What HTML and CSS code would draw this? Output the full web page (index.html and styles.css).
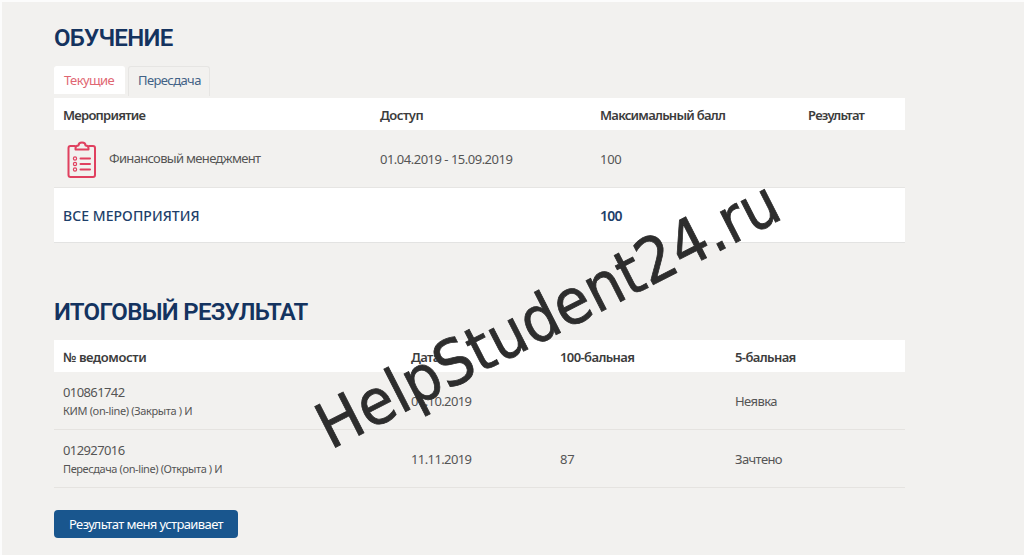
FILE: index.html
```html
<!DOCTYPE html>
<html lang="ru">
<head>
    <meta charset="UTF-8">
    <meta name="viewport" content="width=device-width, initial-scale=1.0">
    <title>Обучение</title>
    <link rel="stylesheet" href="styles.css">
</head>
<body>
    <div class="page">
        <h2 class="title-study">Обучение</h2>
        <div class="tabs">
            <a class="tab active">Текущие</a>
            <a class="tab">Пересдача</a>
        </div>
        <div class="table events">
            <div class="row head">
                <div class="h-event">Мероприятие</div>
                <div class="h-access">Доступ</div>
                <div class="h-max">Максимальный балл</div>
                <div class="h-result">Результат</div>
            </div>
            <div class="row event">
                <div class="event-name">
                    <svg class="icon" width="30" height="38" viewBox="0 0 30 38" fill="none" stroke="#e0405f" stroke-width="2" stroke-linecap="round" stroke-linejoin="round">
                        <path d="M8 5H3.500Q1.500 5 1.500 7V34Q1.500 36 3.500 36H26Q28 36 28 34V7Q28 5 26 5H22"/>
                        <path d="M8.500 8.500V7Q8.500 4.500 11.500 4.500Q11.500 1.500 15 1.500T18.500 4.500Q21.500 4.500 21.500 7V8.500Z"/>
                        <path d="M13.500 17.500H23M13.500 23H23M13.500 28.500H23"/>
                        <g stroke-width="1.200">
                            <circle cx="8" cy="17.500" r="1.600"/>
                            <circle cx="8" cy="23" r="1.600"/>
                            <circle cx="8" cy="28.500" r="1.600"/>
                        </g>
                    </svg>
                    <span class="subject">Финансовый менеджмент</span>
                </div>
                <div class="period">01.04.2019 - 15.09.2019</div>
                <div class="num">100</div>
                <div></div>
            </div>
            <div class="row total">
                <div class="all">ВСЕ МЕРОПРИЯТИЯ</div>
                <div></div>
                <div class="all-num">100</div>
                <div></div>
            </div>
        </div>

        <h2 class="title-final">Итоговый результат</h2>
        <div class="table results">
            <div class="row head">
                <div class="h-sheet">№ ведомости</div>
                <div class="h-date">Дата</div>
                <div class="h-hundred">100-бальная</div>
                <div class="h-five">5-бальная</div>
            </div>
            <div class="row result">
                <div>
                    <div class="sheet">010861742</div>
                    <div class="note note-kim">КИМ (on-line) (Закрыта ) И</div>
                </div>
                <div class="date">01.10.2019</div>
                <div></div>
                <div class="mark">Неявка</div>
            </div>
            <div class="row result">
                <div>
                    <div class="sheet">012927016</div>
                    <div class="note">Пересдача (on-line) (Открыта ) И</div>
                </div>
                <div class="date">11.11.2019</div>
                <div class="num">87</div>
                <div class="mark">Зачтено</div>
            </div>
        </div>
        <button class="btn">Результат меня устраивает</button>
    </div>
    <div class="watermark">HelpStudent24.ru</div>
</body>
</html>
```
FILE: styles.css
```css
* { box-sizing: border-box; }
body { margin: 0; height: 555px; overflow: hidden; position: relative; background: #f2f1ef; border-top: 2px solid #fcfcfc; border-left: 2px solid #fcfcfc; font-family: "Noto Sans", "Open Sans", sans-serif; font-size: 13px; letter-spacing: -0.6px; color: #555; white-space: nowrap; }
.page { width: 903px; padding: 20px 0 0 52px; }
h2 { margin: 0; height: 32px; line-height: 32px; font-family: Roboto, sans-serif; font-size: 24px; font-weight: 600; letter-spacing: -0.7px; color: #14335f; text-transform: uppercase; }
.tabs { display: flex; gap: 3px; height: 30px; margin-top: 12px; align-items: flex-start; }
.tab { height: 30px; width: 82px; line-height: 26px; padding: 0 9px; border: 1px solid #e6e5e3; border-bottom: none; border-radius: 3px 3px 0 0; color: #426286; }
.tab.active { width: 71px; height: 28px; background: #fff; border-color: #fff; color: #df6672; }
.table { width: 851px; }
.events { margin-top: 2px; }
.row { display: grid; align-items: center; padding-left: 9px; }
.events .row { grid-template-columns: 317px 220px 208px 1fr; }
.results .row { grid-template-columns: 348px 149px 175px 1fr; }
.head { height: 32px; background: #fff; color: #3c3c3c; font-weight: 600; padding-top: 2px; }
.events .head { letter-spacing: -0.75px; }
.h-access { letter-spacing: -0.5px; }
.h-sheet { letter-spacing: -0.4px; }
.event { height: 58px; border-bottom: 1px solid #e6e5e3; padding-top: 1px; }
.event-name { display: flex; align-items: center; gap: 12px; padding-left: 4px; margin-top: -3px; }
.icon { position: relative; top: 2px; }
.subject { letter-spacing: -0.68px; }
.period { letter-spacing: -0.5px; }
.num { letter-spacing: -0.3px; }
.total { height: 55px; background: #fff; border-bottom: 1px solid #e3e3e2; color: #1e3f6a; font-size: 14px; font-weight: 500; letter-spacing: 0.05px; }
.all-num { font-weight: 600; letter-spacing: -0.7px; }
.title-final { margin-top: 53px; }
.results { margin-top: 12px; }
.result { height: 58px; border-bottom: 1px solid #e5e3e0; padding-top: 1px; }
.sheet { line-height: 19px; }
.note { font-size: 11px; line-height: 18px; letter-spacing: -0.4px; }
.note-kim { letter-spacing: -0.35px; }
.btn { display: block; width: 184px; height: 28px; margin-top: 22px; padding: 0; border: none; border-radius: 4px; background: #19568e; color: #fff; font-family: inherit; font-size: 13px; letter-spacing: -0.6px; }
.watermark { position: absolute; left: 329px; top: 393px; line-height: 68px; font-family: "DejaVu Sans", sans-serif; font-size: 63px; letter-spacing: 0; color: #2d2d2d; -webkit-text-stroke: 0.8px #2d2d2d; transform-origin: 0 56px; transform: rotate(-27.1deg) scaleX(0.915); }
```
